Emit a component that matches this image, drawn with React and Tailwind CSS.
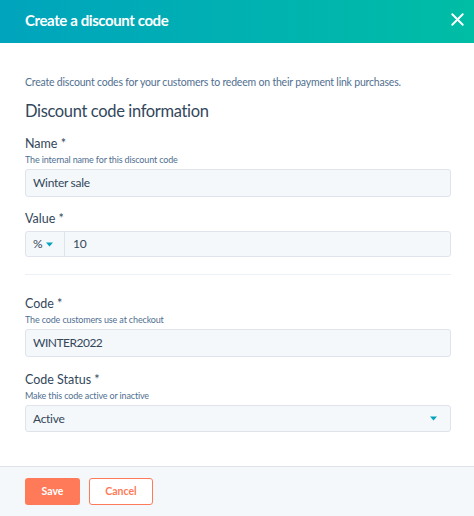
import { X } from "lucide-react"

function Caret() {
    return (
        <svg width="7" height="5" viewBox="0 0 7 5" className="shrink-0">
            <path d="M0 0.5 L7 0.5 L3.5 4.5 Z" fill="#00a4bd" />
        </svg>
    )
}

function Field({ label, help, children, className = "" }) {
    return (
        <div className={className}>
            <div className="text-[12.5px] leading-[16px] text-[#33475b]">{label}</div>
            {help && <div className="text-[9px] leading-[13px] tracking-[-0.15px] mt-px text-[#516f90]">{help}</div>}
            <div className={help ? "mt-[3px]" : "mt-[4px]"}>{children}</div>
        </div>
    )
}

export default function App() {
    return (
        <div className="w-[474px] h-[516px] bg-white flex flex-col font-['Lato',sans-serif] text-[#33475b] overflow-hidden">
            <div className="h-[43px] shrink-0 flex items-center justify-between pl-[25px] pr-[6px] bg-gradient-to-r from-[#00a4bd] to-[#00bda5]">
                <h1 className="text-white text-[15px] font-bold tracking-[-0.4px] pb-[2px]">Create a discount code</h1>
                <X size={21} strokeWidth={2.2} color="#ffffff" className="mb-[5px]" />
            </div>

            <div className="flex-1 pl-[25px] pr-[23px] pt-[32px]">
                <p className="text-[10.5px] leading-[14px] tracking-[-0.2px] text-[#516f90]">
                    Create discount codes for your customers to redeem on their payment link purchases.
                </p>
                <h2 className="text-[16.5px] leading-[22px] tracking-[-0.35px] mt-[11px] text-[#33475b]">Discount code information</h2>

                <Field label="Name *" help="The internal name for this discount code" className="mt-[14px]">
                    <div className="h-[28px] rounded-[3px] border border-[#dfe3eb] bg-[#f5f8fa] flex items-center px-[7px] text-[12px] tracking-[-0.3px]">
                        Winter sale
                    </div>
                </Field>

                <Field label="Value *" className="mt-[14px]">
                    <div className="h-[26px] rounded-[3px] border border-[#dfe3eb] bg-[#f5f8fa] flex items-stretch text-[12px] tracking-[-0.3px]">
                        <div className="w-[39px] border-r border-[#dfe3eb] flex items-center gap-[4px] pl-[7px]">
                            <span>%</span>
                            <Caret />
                        </div>
                        <div className="flex items-center pl-[8px]">10</div>
                    </div>
                </Field>

                <div className="h-px bg-[#eaf0f6] mt-[17px]" />

                <Field label="Code *" help="The code customers use at checkout" className="mt-[21px]">
                    <div className="h-[28px] rounded-[3px] border border-[#dfe3eb] bg-[#f5f8fa] flex items-center px-[7px] text-[12px] tracking-[-0.5px]">
                        WINTER2022
                    </div>
                </Field>

                <Field label="Code Status *" help="Make this code active or inactive" className="mt-[15px]">
                    <div className="h-[27px] rounded-[3px] border border-[#dfe3eb] bg-[#f5f8fa] flex items-center justify-between pl-[7px] pr-[13px] text-[12px] tracking-[-0.3px]">
                        <span>Active</span>
                        <Caret />
                    </div>
                </Field>
            </div>

            <div className="h-[50px] shrink-0 bg-[#f5f8fa] border-t border-[#dfe3eb] flex items-center gap-[9px] px-[25px]">
                <button className="w-[55px] h-[27px] rounded-[3px] bg-[#ff7a59] text-white text-[10.5px] font-bold">Save</button>
                <button className="w-[64px] h-[27px] rounded-[3px] bg-white border border-[#ff7a59] text-[#ff7a59] text-[10.5px] font-bold">Cancel</button>
            </div>
        </div>
    )
}
